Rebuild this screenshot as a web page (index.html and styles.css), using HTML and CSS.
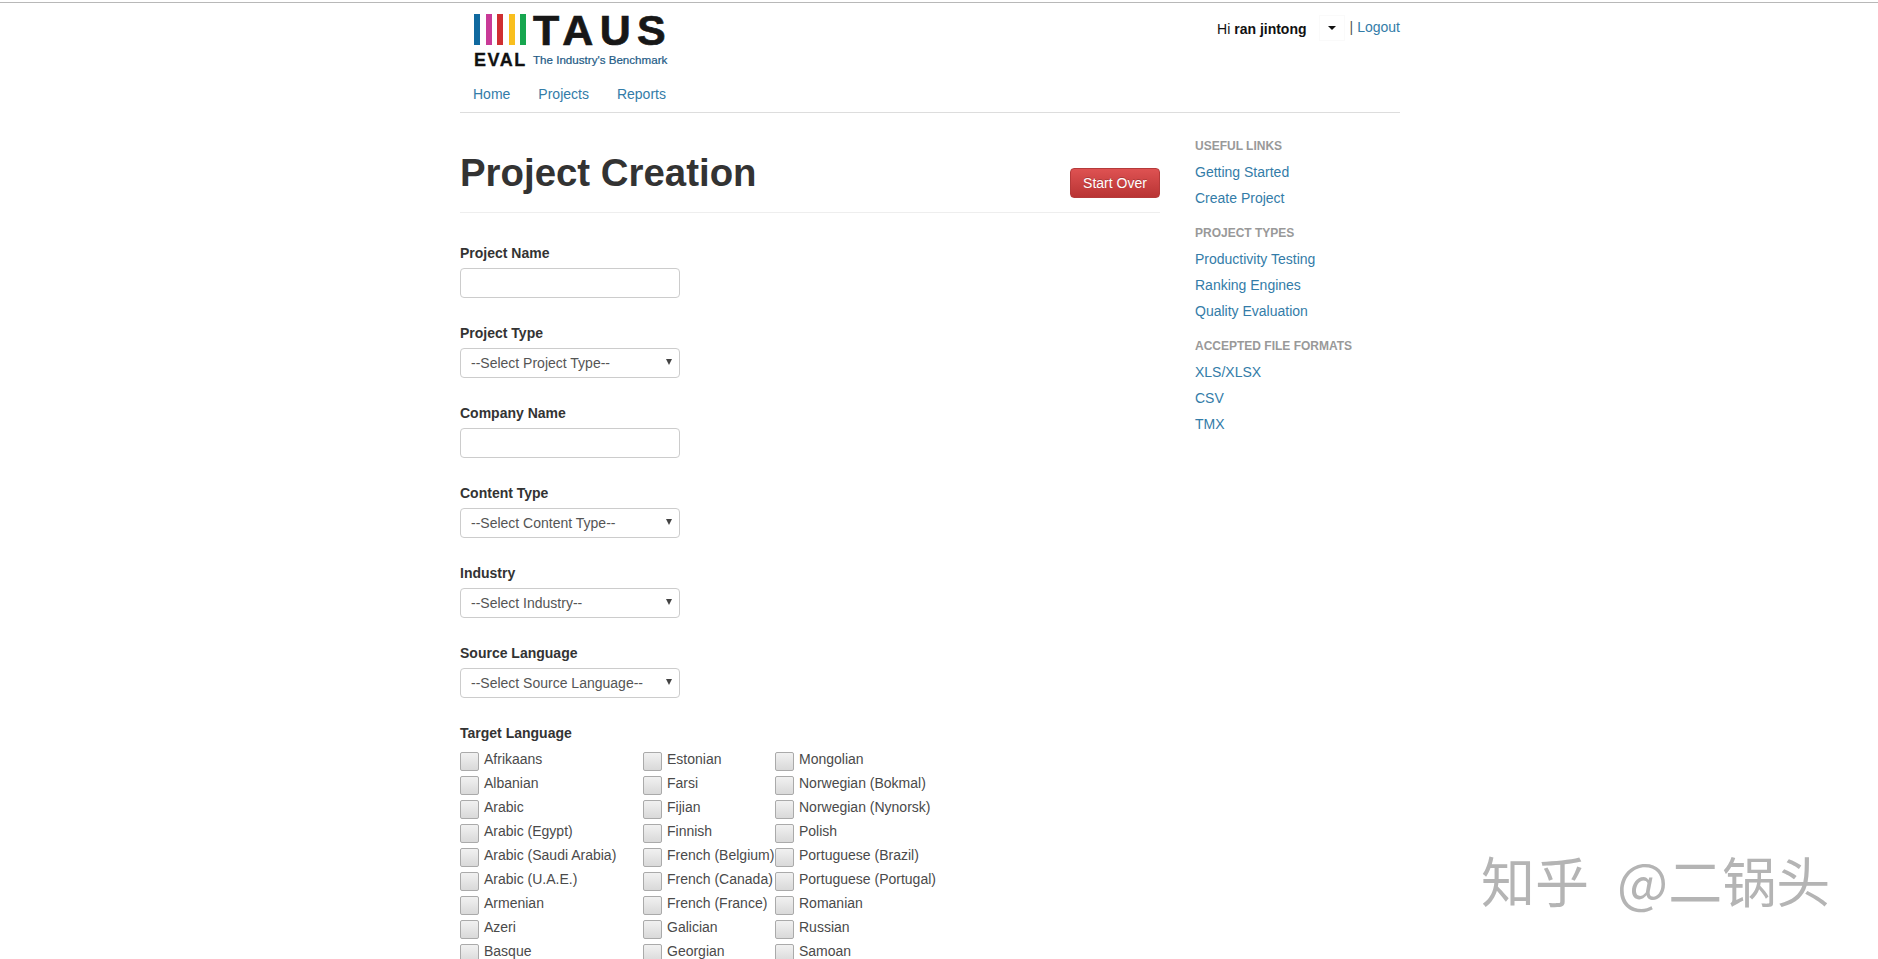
FILE: index.html
```html
<!DOCTYPE html>
<html lang="en">
<head>
<meta charset="utf-8">
<title>Project Creation</title>
<link rel="stylesheet" href="styles.css">
</head>
<body>
<div class="topline"></div>
<div class="page">
  <header class="masthead">
    <div class="brand-row">
      <div class="logo">
        <div class="logo-left">
          <div class="bars"><i class="b1"></i><i class="b2"></i><i class="b3"></i><i class="b4"></i><i class="b5"></i></div>
          <div class="eval">EVAL</div>
        </div>
        <div class="logo-right">
          <div class="taus">TAUS</div>
          <div class="tagline">The Industry's Benchmark</div>
        </div>
      </div>
      <div class="user">
        <span class="hi">Hi <b>ran jintong</b></span>
        <span class="caret-box"><i class="caret"></i></span>
        <span class="sep">|</span>
        <a href="#">Logout</a>
      </div>
    </div>
    <nav class="nav"><a href="#">Home</a><a href="#">Projects</a><a href="#">Reports</a></nav>
  </header>
  <div class="columns">
    <main class="content">
      <div class="title-row">
        <h1>Project Creation</h1>
        <button class="btn-danger" type="button">Start Over</button>
      </div>
      <form class="form">
        <div class="field"><label>Project Name</label><input class="control" type="text"></div>
        <div class="field"><label>Project Type</label><div class="select-wrap"><select class="control"><option>--Select Project Type--</option></select></div></div>
        <div class="field"><label>Company Name</label><input class="control" type="text"></div>
        <div class="field"><label>Content Type</label><div class="select-wrap"><select class="control"><option>--Select Content Type--</option></select></div></div>
        <div class="field"><label>Industry</label><div class="select-wrap"><select class="control"><option>--Select Industry--</option></select></div></div>
        <div class="field"><label>Source Language</label><div class="select-wrap"><select class="control"><option>--Select Source Language--</option></select></div></div>
        <div class="field"><label>Target Language</label>
          <div class="langs">
            <div class="lang"><i class="box"></i>Afrikaans</div>
            <div class="lang"><i class="box"></i>Estonian</div>
            <div class="lang"><i class="box"></i>Mongolian</div>
            <div class="lang"><i class="box"></i>Albanian</div>
            <div class="lang"><i class="box"></i>Farsi</div>
            <div class="lang"><i class="box"></i>Norwegian (Bokmal)</div>
            <div class="lang"><i class="box"></i>Arabic</div>
            <div class="lang"><i class="box"></i>Fijian</div>
            <div class="lang"><i class="box"></i>Norwegian (Nynorsk)</div>
            <div class="lang"><i class="box"></i>Arabic (Egypt)</div>
            <div class="lang"><i class="box"></i>Finnish</div>
            <div class="lang"><i class="box"></i>Polish</div>
            <div class="lang"><i class="box"></i>Arabic (Saudi Arabia)</div>
            <div class="lang"><i class="box"></i>French (Belgium)</div>
            <div class="lang"><i class="box"></i>Portuguese (Brazil)</div>
            <div class="lang"><i class="box"></i>Arabic (U.A.E.)</div>
            <div class="lang"><i class="box"></i>French (Canada)</div>
            <div class="lang"><i class="box"></i>Portuguese (Portugal)</div>
            <div class="lang"><i class="box"></i>Armenian</div>
            <div class="lang"><i class="box"></i>French (France)</div>
            <div class="lang"><i class="box"></i>Romanian</div>
            <div class="lang"><i class="box"></i>Azeri</div>
            <div class="lang"><i class="box"></i>Galician</div>
            <div class="lang"><i class="box"></i>Russian</div>
            <div class="lang"><i class="box"></i>Basque</div>
            <div class="lang"><i class="box"></i>Georgian</div>
            <div class="lang"><i class="box"></i>Samoan</div>
          </div>
        </div>
      </form>
    </main>
    <aside class="sidebar">
      <h5>Useful Links</h5>
      <a href="#">Getting Started</a>
      <a href="#">Create Project</a>
      <h5>Project Types</h5>
      <a href="#">Productivity Testing</a>
      <a href="#">Ranking Engines</a>
      <a href="#">Quality Evaluation</a>
      <h5>Accepted File Formats</h5>
      <a href="#">XLS/XLSX</a>
      <a href="#">CSV</a>
      <a href="#">TMX</a>
    </aside>
  </div>
</div>
<div class="watermark">知乎 @二锅头</div>
</body>
</html>
```

FILE: styles.css
```css
html, body {
  margin: 0;
  height: 959px;
  overflow: hidden;
  background: #fff;
}
body {
  font-family: "Liberation Sans", Arial, sans-serif;
  font-size: 14px;
  line-height: 20px;
  color: #333;
  position: relative;
}
a {
  color: #337ca8;
  text-decoration: none;
}
.topline {
  height: 2px;
  border-bottom: 1px solid #b8b8b8;
}
.page {
  width: 940px;
  margin-left: 460px;
}
.masthead {
  height: 110px;
  box-sizing: border-box;
  border-bottom: 1px solid #ddd;
  display: flex;
  flex-direction: column;
}
.brand-row {
  display: flex;
  justify-content: space-between;
  height: 78px;
}
.logo {
  display: flex;
  margin: 11px 0 0 14px;
  gap: 7px;
  align-items: flex-start;
}
.logo-left {
  width: 52px;
}
.bars {
  display: flex;
  justify-content: space-between;
  height: 31px;
}
.bars i {
  display: block;
  width: 6px;
  height: 31px;
}
.b1 { background: #10699f; }
.b2 { background: #c93a97; }
.b3 { background: #cf2f32; }
.b4 { background: #f9bf1e; }
.b5 { background: #17a64f; }
.eval {
  font-size: 18px;
  font-weight: 700;
  line-height: 16px;
  color: #111;
  margin-top: 7px;
  letter-spacing: 1.5px;
  -webkit-text-stroke: .3px #111;
}
.logo-right {
  width: 136px;
}
.taus {
  font-size: 43px;
  font-weight: 700;
  line-height: 32px;
  letter-spacing: 6.3px;
  color: #171717;
  white-space: nowrap;
  -webkit-text-stroke: .7px #171717;
}
.tagline {
  font-size: 11.6px;
  line-height: 14px;
  color: #1d5a85;
  margin-top: 7px;
  white-space: nowrap;
  -webkit-text-stroke: .2px #1d5a85;
}
.user {
  display: flex;
  align-items: flex-start;
  margin-top: 12px;
  color: #111;
}
.hi {
  margin-top: 4px;
  padding-left: 1px;
}
.hi b {
  color: #111;
}
.caret-box {
  width: 26px;
  height: 26px;
  margin-left: 12px;
  display: flex;
  align-items: center;
  justify-content: center;
  border: 1px solid #fafafa;
  box-sizing: border-box;
}
.caret {
  display: block;
  width: 0;
  height: 0;
  border-left: 4px solid transparent;
  border-right: 4px solid transparent;
  border-top: 4px solid #111;
  margin-top: -1px;
}
.sep {
  margin: 2px 0 0 5px;
  color: #555;
}
.user a {
  margin: 2px 0 0 4px;
}
.nav {
  display: flex;
  padding-left: 13px;
  gap: 28px;
  margin-top: 3px;
}
.columns {
  display: flex;
  gap: 35px;
}
.content {
  width: 700px;
}
.title-row {
  height: 100px;
  box-sizing: border-box;
  border-bottom: 1px solid #eee;
  display: flex;
  justify-content: space-between;
}
h1 {
  margin: 40px 0 0;
  font-size: 38.4px;
  line-height: 40px;
  font-weight: 700;
  color: #333;
}
.btn-danger {
  width: 90px;
  height: 30px;
  margin-top: 55px;
  padding: 0;
  border: 1px solid #b53a3a;
  border-radius: 4px;
  background: linear-gradient(#de5252, #b93434);
  color: #fff;
  font: 14px "Liberation Sans", Arial, sans-serif;
  text-shadow: 0 -1px 0 rgba(0, 0, 0, .2);
}
.form {
  padding-top: 30px;
}
.field {
  margin-bottom: 25px;
}
.field label {
  display: block;
  font-weight: 700;
  color: #333;
  margin-bottom: 5px;
}
.control {
  display: block;
  width: 220px;
  height: 30px;
  box-sizing: border-box;
  border: 1px solid #ccc;
  border-radius: 4px;
  background: #fff;
  padding: 0 10px;
  font: 14px "Liberation Sans", Arial, sans-serif;
  color: #555;
  appearance: none;
  -webkit-appearance: none;
  outline: 0;
}
.select-wrap {
  position: relative;
  width: 220px;
}
.select-wrap::after {
  content: "";
  position: absolute;
  right: 8px;
  top: 11px;
  width: 0;
  height: 0;
  border-left: 3px solid transparent;
  border-right: 3px solid transparent;
  border-top: 6px solid #444;
}
.langs {
  display: grid;
  grid-template-columns: 183px 132px auto;
  grid-auto-rows: 24px;
  padding-top: 1px;
}
.lang {
  display: flex;
  align-items: flex-start;
  white-space: nowrap;
  color: #4a4a4a;
  line-height: 20px;
}
.box {
  flex: none;
  display: block;
  box-sizing: border-box;
  width: 19px;
  height: 19px;
  margin: 3px 5px 0 0;
  border: 1px solid #aaa;
  border-radius: 2px;
  background: linear-gradient(#f1f1f1, #d9d9d9);
}
.sidebar {
  width: 205px;
  padding-top: 20px;
}
.sidebar h5 {
  margin: 9px 0 0;
  font-size: 12px;
  line-height: 26px;
  font-weight: 700;
  color: #999;
  text-transform: uppercase;
}
.sidebar h5:first-child {
  margin-top: 0;
}
.sidebar a {
  display: block;
  line-height: 26px;
}
.watermark {
  position: absolute;
  left: 1481px;
  top: 848px;
  font-family: "Noto Sans CJK SC", sans-serif;
  font-size: 54px;
  line-height: 64px;
  word-spacing: 16px;
  color: #b4b4b4;
  white-space: nowrap;
}
```
